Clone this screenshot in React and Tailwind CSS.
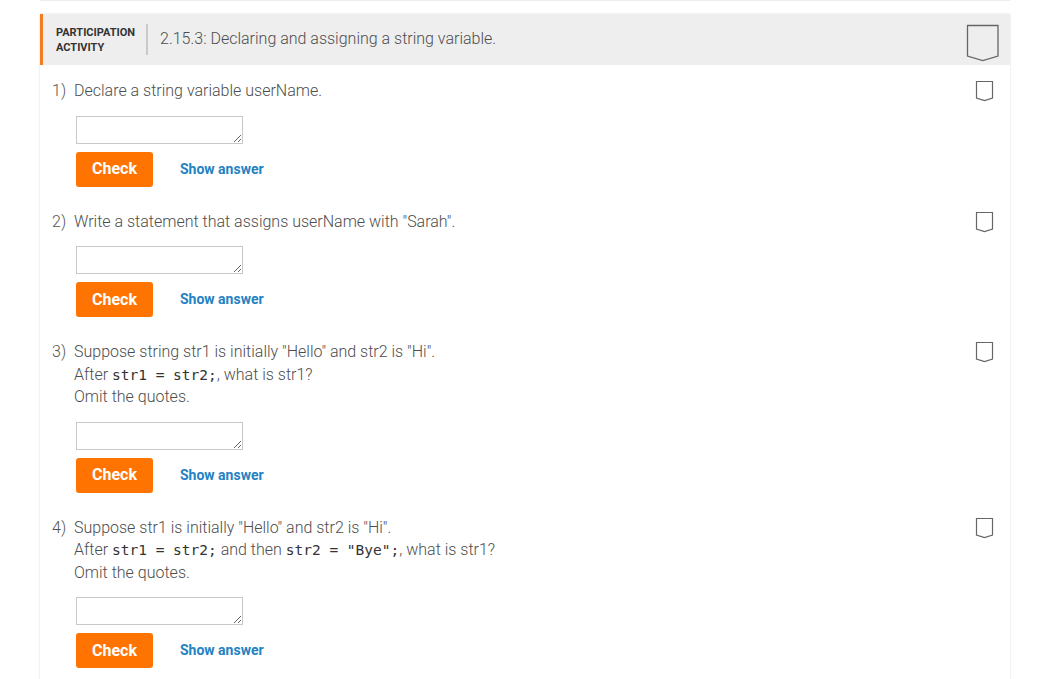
import React from "react";

const Code = ({ children }) => (
  <code className="font-['DejaVu_Sans_Mono',monospace] text-[14.5px] leading-none text-[#333]">{children}</code>
);

const QIcon = () => (
  <svg width="19" height="22" viewBox="0 0 19 22" className="shrink-0">
    <path d="M1.5 1.5 H17.5 V18 L9.5 20.5 L1.5 18 Z" fill="none" stroke="#666" strokeWidth="1.2" />
  </svg>
);

function Question({ num, lines }) {
  return (
    <div className="flex">
      <span className="w-[22px] shrink-0 text-[#555] leading-[22.5px]">{num})</span>
      <div className="flex-1">
        <div className="leading-[22.5px] text-[#4d4d4d]">
          {lines.map((l, i) => (
            <div key={i}>{l}</div>
          ))}
        </div>
        <textarea className="block mt-[13px] ml-[2px] w-[167px] h-[28px] border border-[#c8c8c8] bg-white outline-none" />
        <div className="flex items-center mt-[8px] ml-[2px]">
          <button className="w-[77px] h-[35px] rounded-[3px] bg-[#ff7300] text-white font-bold text-[16px]">Check</button>
          <span className="ml-[27px] text-[14px] font-bold text-[#2382c2]">Show answer</span>
        </div>
      </div>
      <QIcon />
    </div>
  );
}

export default function App() {
  return (
    <div className="bg-white min-h-[679px] font-['Roboto',sans-serif] font-light text-[16px]">
      <div className="mx-[40px] w-[970px] h-[1px] bg-[#ececec]" />
      <div className="ml-[40px] mt-[13px] w-[970px] bg-white shadow-[0_0_2px_rgba(0,0,0,0.15)]">
        <div className="flex items-center h-[51px] bg-[#eeeeee] border-l-[3px] border-[#f47c20] pl-[13px] pr-[10px]">
          <div className="text-[11px] font-bold leading-[15px] text-[#333] w-[78px]">
            PARTICIPATION
            <br />
            ACTIVITY
          </div>
          <div className="ml-[12px] w-[2px] h-[31px] bg-[#cacaca]" />
          <div className="ml-[12px] mb-[2px] text-[16px] text-[#4d4d4d] flex-1">2.15.3: Declaring and assigning a string variable.</div>
          <svg width="34" height="38" viewBox="0 0 34 38" className="mt-[6px]">
            <path d="M1.5 1.5 H32 V32 L16.75 36.5 L1.5 32 Z" fill="none" stroke="#666" strokeWidth="1.3" />
          </svg>
        </div>
        <div className="pl-[12px] pr-[16px] pt-[15px] pb-[30px] flex flex-col gap-[24px]">
          <Question num={1} lines={["Declare a string variable userName."]} />
          <Question num={2} lines={['Write a statement that assigns userName with "Sarah".']} />
          <Question
            num={3}
            lines={[
              'Suppose string str1 is initially "Hello" and str2 is "Hi".',
              <>After <Code>str1 = str2;</Code>, what is str1?</>,
              "Omit the quotes.",
            ]}
          />
          <Question
            num={4}
            lines={[
              'Suppose str1 is initially "Hello" and str2 is "Hi".',
              <>After <Code>str1 = str2;</Code> and then <Code>str2 = "Bye";</Code>, what is str1?</>,
              "Omit the quotes.",
            ]}
          />
        </div>
      </div>
    </div>
  );
}
